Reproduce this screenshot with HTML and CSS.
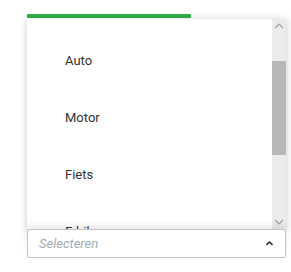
FILE: index.html
```html
<!DOCTYPE html>
<html>
<head>
    <title>Vervoer</title>
    <link rel="stylesheet" href="styles.css">
</head>
<body>
    <div class="field">
        <div class="progress"></div>
        <div class="menu">
            <ul class="options">
                <li>Auto</li>
                <li>Motor</li>
                <li>Fiets</li>
                <li>E-bike</li>
            </ul>
            <div class="scrollbar">
                <div class="arrow">
                    <svg width="10" height="6" viewBox="0 0 10 6"><path d="M1 5 L5 1 L9 5" fill="none" stroke="#a3a3a3" stroke-width="1.2"/></svg>
                </div>
                <div class="track"><div class="thumb"></div></div>
                <div class="arrow">
                    <svg width="10" height="6" viewBox="0 0 10 6"><path d="M1 1 L5 5 L9 1" fill="none" stroke="#a3a3a3" stroke-width="1.2"/></svg>
                </div>
            </div>
        </div>
        <div class="select">
            <span class="placeholder">Selecteren</span>
            <svg class="caret" width="7" height="5" viewBox="0 0 7 5"><path d="M0.5 4 L3.5 1 L6.5 4" fill="none" stroke="#333" stroke-width="1.6"/></svg>
        </div>
    </div>
</body>
</html>
```

FILE: styles.css
```css
body {
    margin: 0;
    font-family: Roboto, 'Liberation Sans', Arial, sans-serif;
    background: #ffffff;
}

.field {
    width: 259px;
    margin: 14px 0 0 27px;
    display: flex;
    flex-direction: column;
}

.progress {
    width: 164px;
    height: 4px;
    background-color: #2fb14b;
    border-radius: 1px;
    margin-bottom: 1px;
}

.menu {
    display: flex;
    height: 210px;
    background: #ffffff;
    box-shadow: 0 1px 8px rgba(0, 0, 0, 0.22);
}

.options {
    flex: 1;
    list-style: none;
    margin: 0;
    padding: 13px 0 0 0;
    overflow: hidden;
}

.options li {
    height: 57px;
    line-height: 57px;
    padding-left: 38px;
    font-size: 13px;
    color: #333333;
}

.scrollbar {
    width: 14px;
    display: flex;
    flex-direction: column;
    background-color: #ebebeb;
}

.arrow {
    height: 14px;
    display: flex;
    align-items: center;
    justify-content: center;
}

.track {
    flex: 1;
}

.thumb {
    margin-top: 28px;
    height: 94px;
    background-color: #b8b8b8;
}

.select {
    position: relative;
    height: 27px;
    border: 1px solid #c4c4c4;
    border-radius: 2px;
    background: #ffffff;
    display: flex;
    align-items: center;
    justify-content: space-between;
    padding: 0 12px 0 11px;
    box-shadow: 0 -4px 6px rgba(0, 0, 0, 0.08);
}

.placeholder {
    font-size: 13px;
    font-style: italic;
    color: #a3abb5;
}

.caret {
    display: block;
}
```
